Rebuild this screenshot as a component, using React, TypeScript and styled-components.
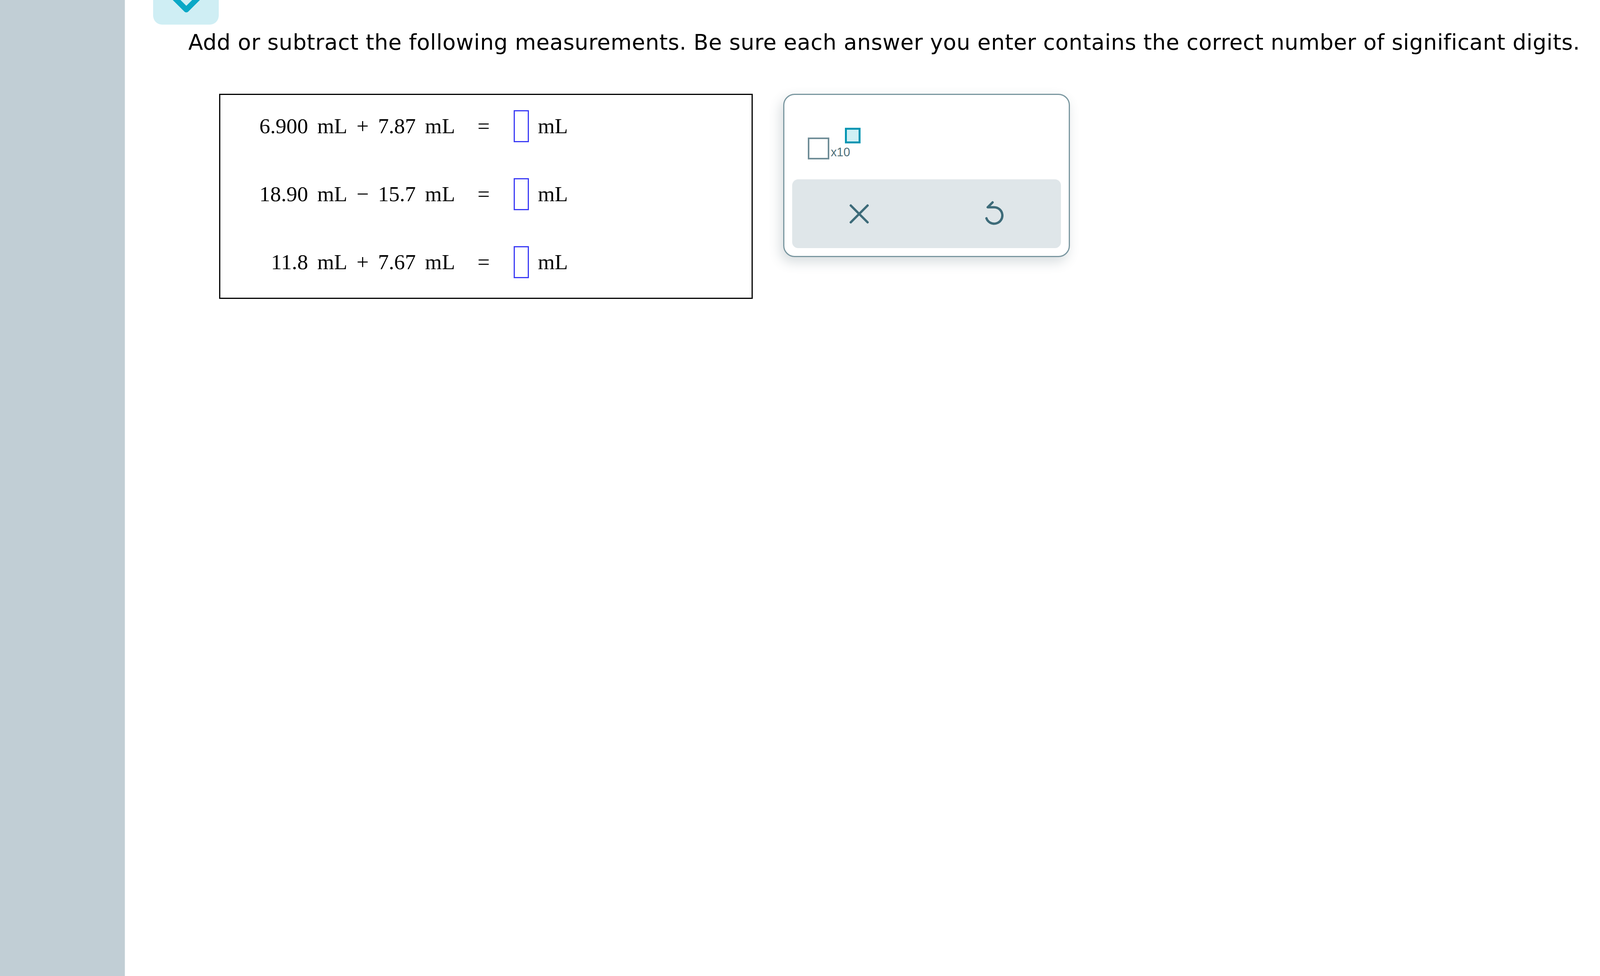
import React from "react";
import styled, { createGlobalStyle } from "styled-components";

const S = 3.074;
const u = (n: number) => `${(n * S).toFixed(2)}px`;

const Global = createGlobalStyle`
  html, body { margin: 0; padding: 0; background: #ffffff; }
  body { font-family: "DejaVu Sans", Verdana, sans-serif; color: #000; }
  * { box-sizing: border-box; }
`;

const Page = styled.div`
  display: flex;
  min-height: 100vh;
`;

const Sidebar = styled.aside`
  flex: 0 0 auto;
  width: ${u(104.1)};
  background: #c1ced5;
  border-right: ${u(0.5)} solid #d6e0e4;
`;

const Main = styled.main`
  flex: 1 1 auto;
  display: flex;
  flex-direction: column;
  align-items: flex-start;
  padding-left: ${u(23.4)};
`;

const TopButton = styled.button`
  width: ${u(54.65)};
  height: ${u(20.5)};
  padding: 0;
  border: none;
  background: #cfeef4;
  border-radius: 0 0 ${u(7.5)} ${u(7.5)};
  display: flex;
  justify-content: center;
  align-items: flex-start;
  overflow: hidden;
  cursor: pointer;
`;

const Instruction = styled.p`
  margin: ${u(3.8)} 0 0 ${u(29.3)};
  font-family: "DejaVu Sans", Verdana, sans-serif;
  font-size: ${u(18)};
  line-height: ${u(21.6)};
  letter-spacing: ${u(0.17)};
  white-space: nowrap;
  color: #000;
`;

const Workspace = styled.section`
  display: flex;
  align-items: flex-start;
  gap: ${u(25.2)};
  margin-top: ${u(32.2)};
  padding-left: ${u(55)};
`;

const EquationBox = styled.div`
  width: ${u(444.5)};
  border: ${u(1.2)} solid #000;
  padding: ${u(12.6)} 0 ${u(16.4)};
  display: flex;
  flex-direction: column;
  gap: ${u(29.9)};
  font-family: "Liberation Serif", "Times New Roman", serif;
  font-size: ${u(18)};
  color: #000;
`;

const Row = styled.div`
  display: grid;
  grid-template-columns: ${u(195.5)} max-content max-content max-content;
  justify-content: start;
  align-items: center;
  height: ${u(26.7)};
`;

const Expr = styled.div`
  display: flex;
  justify-content: flex-end;
  gap: ${u(7.7)};
  white-space: nowrap;
`;

const Equals = styled.span`
  margin-left: ${u(18.7)};
`;

const AnswerBox = styled.span`
  display: block;
  margin-left: ${u(20)};
  width: ${u(12.7)};
  height: ${u(26.7)};
  border: ${u(1.15)} solid #3b3bf5;
  background: #fff;
`;

const Unit = styled.span`
  margin-left: ${u(7.4)};
`;

const Panel = styled.div`
  width: ${u(238.8)};
  height: ${u(136)};
  border: ${u(1)} solid #7a97a0;
  border-radius: ${u(9.5)};
  background: #fff;
  box-shadow: ${u(-2)} ${u(4)} ${u(10)} rgba(60, 85, 95, 0.2);
  padding: ${u(6.5)};
  display: flex;
  flex-direction: column;
`;

const SciArea = styled.div`
  flex: 1 1 auto;
  display: flex;
  align-items: flex-start;
  padding: ${u(20.8)} 0 0 ${u(13.1)};
`;

const SciButton = styled.button`
  display: inline-flex;
  align-items: flex-end;
  height: ${u(26.2)};
  padding: 0;
  border: none;
  background: transparent;
  cursor: pointer;
`;

const BaseSquare = styled.span`
  display: block;
  width: ${u(17.9)};
  height: ${u(17.9)};
  border: ${u(1.6)} solid #6f8d97;
  background: #fff;
`;

const TimesTen = styled.span`
  margin: 0 0 ${u(0.6)} ${u(1.2)};
  font-family: "Liberation Sans", Arial, sans-serif;
  font-size: ${u(10)};
  line-height: ${u(10)};
  color: #4e6f7a;
`;

const ExpSquare = styled.span`
  display: block;
  align-self: flex-start;
  width: ${u(13)};
  height: ${u(13)};
  margin-left: ${u(-4.4)};
  border: ${u(1.7)} solid #0596b3;
  background: #d0f0f5;
`;

const ToolBar = styled.div`
  flex: 0 0 auto;
  height: ${u(57.3)};
  background: #dfe6e9;
  border-radius: ${u(5)};
  display: grid;
  grid-template-columns: 1fr 1fr;
`;

const ToolButton = styled.button`
  display: flex;
  align-items: center;
  justify-content: center;
  padding: 0;
  border: none;
  background: transparent;
  cursor: pointer;
`;

const Chevron = () => (
  <svg width={u(54.65)} height={u(20.5)} viewBox="0 0 168 63" fill="none">
    <path
      d="M50 -10 L85 24.7 L120 -10"
      stroke="#0aa8c6"
      strokeWidth="14"
      strokeLinecap="round"
      strokeLinejoin="round"
    />
  </svg>
);

const ClearIcon = () => (
  <svg width={u(32.53)} height={u(32.53)} viewBox="0 0 100 100" fill="none">
    <path
      d="M28 29 L71 72 M71 29 L28 72"
      stroke="#3d6b79"
      strokeWidth="6"
      strokeLinecap="round"
    />
  </svg>
);

const UndoIcon = () => (
  <svg width={u(32.53)} height={u(32.53)} viewBox="0 0 100 100" fill="none">
    <path
      d="M47 21 L34.5 33.5 L51 33.5 A21 21 0 1 1 31.3 61.7"
      stroke="#3d6b79"
      strokeWidth="6"
      strokeLinecap="round"
      strokeLinejoin="round"
    />
  </svg>
);

type Problem = { a: string; op: string; b: string };

const problems: Problem[] = [
  { a: "6.900", op: "+", b: "7.87" },
  { a: "18.90", op: "\u2212", b: "15.7" },
  { a: "11.8", op: "+", b: "7.67" },
];

export default function App() {
  return (
    <>
      <Global />
      <Page>
        <Sidebar />
        <Main>
          <TopButton aria-label="Collapse">
            <Chevron />
          </TopButton>
          <Instruction>
            Add or subtract the following measurements. Be sure each answer you enter contains the correct number of significant digits.
          </Instruction>
          <Workspace>
            <EquationBox>
              {problems.map((p, i) => (
                <Row key={i}>
                  <Expr>
                    <span>{p.a}</span>
                    <span>mL</span>
                    <span>{p.op}</span>
                    <span>{p.b}</span>
                    <span>mL</span>
                  </Expr>
                  <Equals>=</Equals>
                  <AnswerBox />
                  <Unit>mL</Unit>
                </Row>
              ))}
            </EquationBox>
            <Panel>
              <SciArea>
                <SciButton aria-label="Scientific notation">
                  <BaseSquare />
                  <TimesTen>x10</TimesTen>
                  <ExpSquare />
                </SciButton>
              </SciArea>
              <ToolBar>
                <ToolButton aria-label="Clear">
                  <ClearIcon />
                </ToolButton>
                <ToolButton aria-label="Undo">
                  <UndoIcon />
                </ToolButton>
              </ToolBar>
            </Panel>
          </Workspace>
        </Main>
      </Page>
    </>
  );
}
